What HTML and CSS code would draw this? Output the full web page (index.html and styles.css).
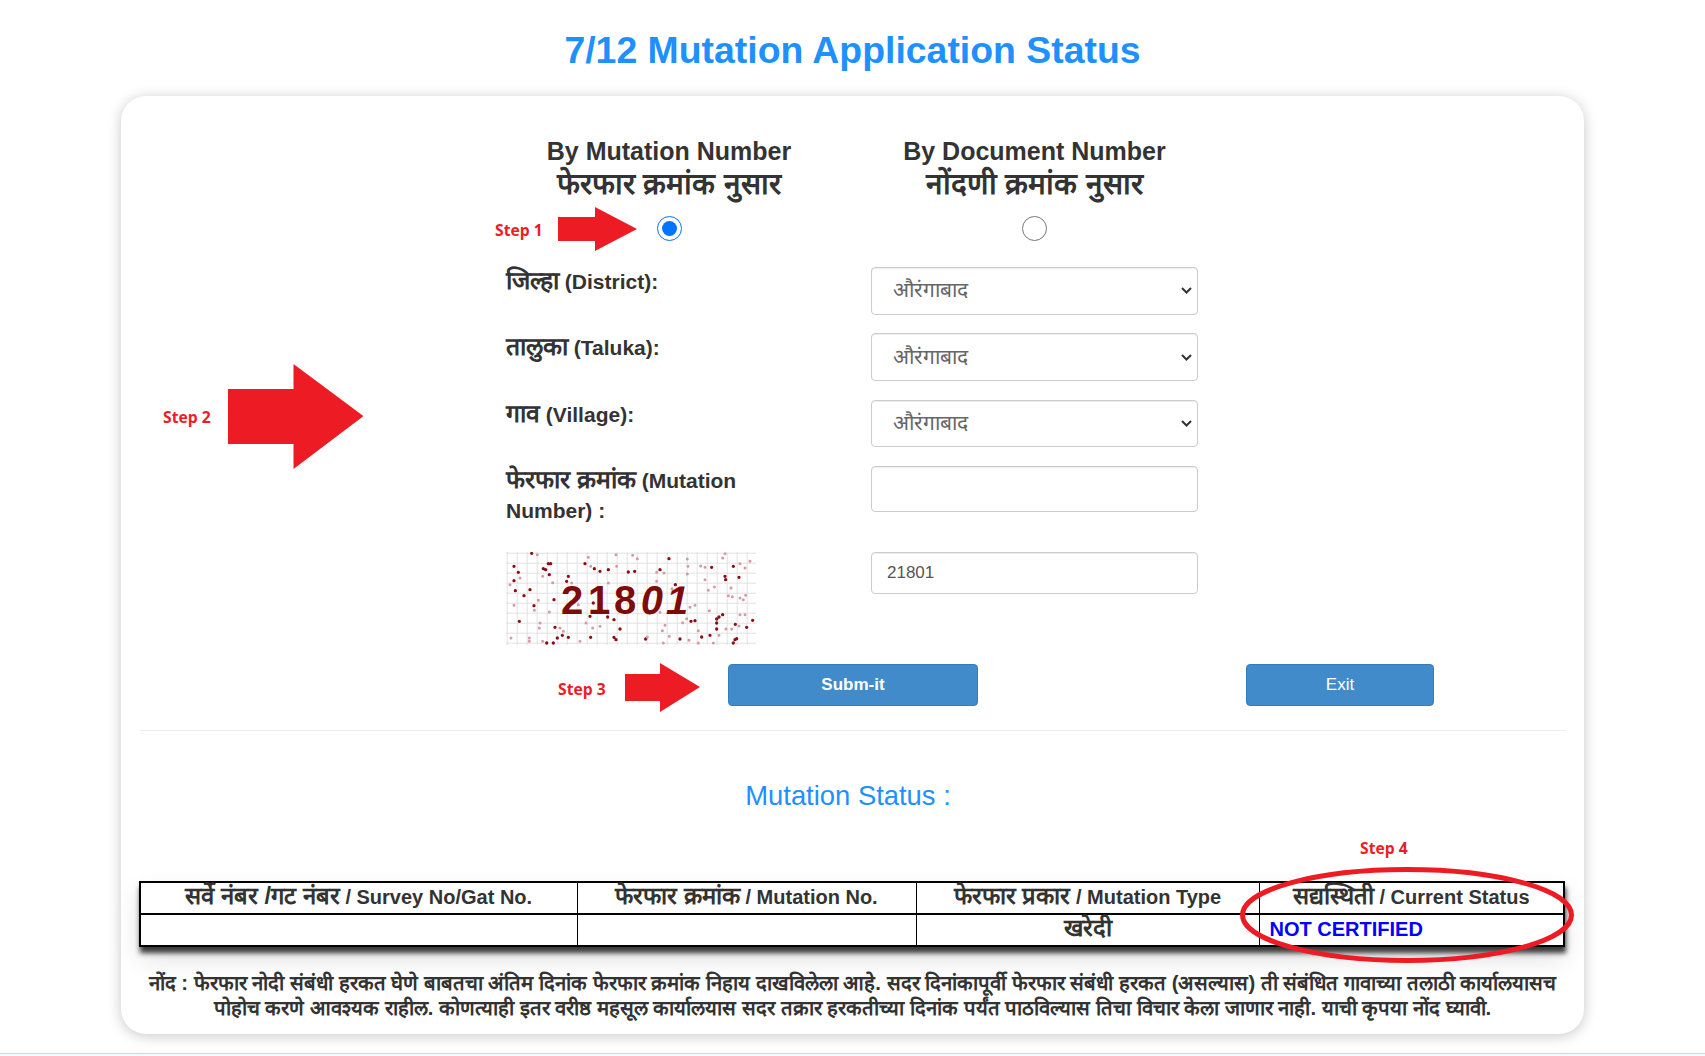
FILE: index.html
```html
<!DOCTYPE html>
<html lang="mr">
<head>
<meta charset="utf-8">
<title>7/12 Mutation Application Status</title>
<link rel="stylesheet" href="styles.css">
</head>
<body>
<div class="page">
  <h1 class="title">7/12 Mutation Application Status</h1>
  <main class="card">
    <form class="form">
      <div class="field choices">
        <label class="choice">By Mutation Number<br><span class="dv">फेरफार क्रमांक नुसार</span><input class="radio" type="radio" name="mode" checked></label>
        <label class="choice">By Document Number<br><span class="dv">नोंदणी क्रमांक नुसार</span><input class="radio" type="radio" name="mode"></label>
      </div>
      <div class="field">
        <label class="label"><span class="dv">जिल्हा</span> (District):</label>
        <select class="control picker"><option>औरंगाबाद</option></select>
      </div>
      <div class="field">
        <label class="label"><span class="dv">तालुका</span> (Taluka):</label>
        <select class="control picker"><option>औरंगाबाद</option></select>
      </div>
      <div class="field">
        <label class="label"><span class="dv">गाव</span> (Village):</label>
        <select class="control picker"><option>औरंगाबाद</option></select>
      </div>
      <div class="field field-tall">
        <label class="label label-wrap"><span class="dv">फेरफार क्रमांक</span> (Mutation Number) :</label>
        <input class="control" type="text">
      </div>
      <div class="field field-captcha">
        <svg class="captcha" viewBox="0 0 250 93" role="img" aria-label="captcha">
          <defs>
            <pattern id="grid" x="0.7" y="0.7" width="10" height="10" patternUnits="userSpaceOnUse">
              <path d="M10 0H0V10" fill="none" stroke="#d9d9d9" stroke-width="1.5"/>
            </pattern>
            <filter id="soft"><feGaussianBlur stdDeviation="0.5"/></filter>
          </defs>
          <rect width="250" height="93" fill="url(#grid)"/>
          <g filter="url(#soft)">
            <g transform="translate(-6 -4) scale(.3333)">
              <path class="speck" d="M95 16h0M42 55h0M55 73h0M42 98h0M46 128h0M90 125h0M72 143h0M145 47h0M152 47h0M130 62h0M137 65h0M148 80h0M162 155h0M102 173h0M58 220h0M165 238h0M172 270h0M187 262h0M205 268h0M140 285h0M160 285h0M205 85h0M200 100h0M255 47h0M283 62h0M300 70h0M325 65h0M385 72h0M280 165h0M270 205h0M323 207h0M342 215h0M360 243h0M342 268h0M348 275h0M272 268h0"/>
              <path class="speck faint" d="M112 20h0M60 90h0M128 85h0M158 104h0M115 157h0M103 187h0M42 172h0M120 225h0M148 192h0M118 240h0M180 240h0M190 250h0M33 270h0M88 270h0M88 280h0M128 280h0M215 105h0M265 28h0M272 55h0M348 20h0M350 55h0M325 105h0M235 170h0M240 190h0M258 225h0M278 240h0M300 235h0M240 280h0M30 110h0"/>
            </g>
            <g transform="translate(124 -4) scale(.3333)">
              <path class="speck" d="M117 32h0M245 58h0M90 65h0M14 70h0M310 55h0M285 85h0M287 95h0M327 88h0M136 110h0M278 200h0M267 207h0M260 213h0M260 225h0M195 218h0M183 220h0M260 243h0M316 229h0M350 238h0M240 262h0M215 267h0M150 273h0M47 273h0M315 275h0M310 285h0M320 272h0M368 217h0"/>
              <path class="speck faint" d="M8 22h0M22 32h0M172 33h0M174 55h0M212 54h0M225 58h0M80 73h0M102 75h0M172 78h0M285 17h0M278 30h0M330 47h0M360 40h0M345 60h0M225 95h0M253 117h0M303 120h0M80 100h0M126 122h0M235 127h0M295 143h0M307 146h0M347 142h0M330 150h0M340 155h0M195 172h0M180 178h0M90 193h0M238 188h0M330 200h0M345 200h0M170 212h0M158 224h0M327 234h0M288 243h0M305 243h0M205 248h0M267 262h0M118 265h0M52 267h0M97 248h0M105 232h0M177 277h0M100 285h0M205 285h0M250 285h0"/>
            </g>
          </g>
          <text class="code" x="55" y="62">2</text>
          <text class="code" x="82" y="62">1</text>
          <text class="code" x="108" y="62">8</text>
          <text class="code" transform="translate(133 62) skewX(-10)" x="0" y="0">0</text>
          <text class="code" transform="translate(158 62) skewX(-12)" x="0" y="0">1</text>
        </svg>
        <input class="control control-code" type="text" value="21801">
      </div>
      <div class="actions">
        <button class="btn btn-submit" type="button">Subm-it</button>
        <button class="btn btn-exit" type="button">Exit</button>
      </div>
    </form>
    <hr class="rule">
    <h2 class="status-heading">Mutation Status :</h2>
    <table class="status-table">
      <thead>
        <tr>
          <th class="col-survey"><span class="dv">सर्वे नंबर /गट नंबर</span> / Survey No/Gat No.</th>
          <th class="col-number"><span class="dv">फेरफार क्रमांक</span> / Mutation No.</th>
          <th class="col-type"><span class="dv">फेरफार प्रकार</span> / Mutation Type</th>
          <th class="col-state"><span class="dv">सद्यस्थिती</span> / Current Status</th>
        </tr>
      </thead>
      <tbody>
        <tr>
          <td></td>
          <td></td>
          <td><span class="dv">खरेदी</span></td>
          <td class="state">NOT CERTIFIED</td>
        </tr>
      </tbody>
    </table>
    <p class="note">नोंद : फेरफार नोदी संबंधी हरकत घेणे बाबतचा अंतिम दिनांक फेरफार क्रमांक निहाय दाखविलेला आहे. सदर दिनांकापूर्वी फेरफार संबंधी हरकत (असल्यास) ती संबंधित गावाच्या तलाठी कार्यालयासच<br>पोहोच करणे आवश्यक राहील. कोणत्याही इतर वरीष्ठ महसूल कार्यालयास सदर तक्रार हरकतीच्या दिनांक पर्यंत पाठविल्यास तिचा विचार केला जाणार नाही. याची कृपया नोंद घ्यावी.</p>
  </main>
  <footer class="foot"></footer>

  <span class="step step-1">Step 1</span>
  <svg class="mark arrow-1" viewBox="0 0 79 44"><polygon points="0,10 37,10 37,0 79,22 37,44 37,34 0,34"/></svg>
  <span class="step step-2">Step 2</span>
  <svg class="mark arrow-2" viewBox="0 0 135.5 105"><polygon points="0,25 65.5,25 65.5,0 135.5,52 65.5,105 65.5,80 0,80"/></svg>
  <span class="step step-3">Step 3</span>
  <svg class="mark arrow-3" viewBox="0 0 75 49"><polygon points="0,11 35,11 35,0 75,24 35,49 35,38 0,38"/></svg>
  <span class="step step-4">Step 4</span>
  <svg class="ring" viewBox="0 0 334 96"><ellipse cx="167" cy="48" rx="164.5" ry="45.5"/></svg>
</div>
</body>
</html>
```
FILE: styles.css
```css
* { box-sizing: border-box; }
html, body { margin: 0; padding: 0; background: #fff; }
body { font-family: "Liberation Sans", Arial, sans-serif; color: #333; }
.page { position: relative; width: 1705px; height: 1056px; overflow: hidden; }
.dv { font-size: 1.19em; line-height: 0; }

.title {
  margin: 0;
  height: 96px;
  padding: 30px 0 0;
  font-size: 37.4px;
  line-height: 40px;
  font-weight: 700;
  text-align: center;
  color: #1e90ff;
}

.card {
  height: 938px;
  margin: 0 121px;
  padding: 38px 19px 0;
  background: #fff;
  border-radius: 25px;
  box-shadow: 0 2px 14px rgba(0, 0, 0, .22);
}

.form { padding-left: 366px; }
.field {
  display: grid;
  grid-template-columns: 326px 327px;
  column-gap: 39px;
  margin-bottom: 18.8px;
}
.choices { margin-bottom: 26px; }
.choice {
  display: block;
  font-size: 25px;
  line-height: 34px;
  font-weight: 700;
  text-align: center;
}
.radio {
  display: block;
  width: 25px;
  height: 25px;
  margin: 14px auto 0;
  accent-color: #0075ff;
}
.label {
  font-size: 21px;
  line-height: 30px;
  font-weight: 700;
}
.label .dv { font-size: 1.18em; }
.label-wrap { padding-right: 60px; }
.control {
  display: block;
  width: 100%;
  height: 47.5px;
  padding: 0 12px 2px 21px;
  border: 1px solid #ccc;
  border-radius: 4px;
  background: #fff;
  box-shadow: inset 0 1px 1px rgba(0, 0, 0, .075);
  font-family: inherit;
  font-size: 21px;
  color: #666;
}
.picker {
  appearance: none;
  background: #fff url("data:image/svg+xml,%3Csvg xmlns='http://www.w3.org/2000/svg' width='11' height='7'%3E%3Cpath d='M1 1l4.5 4.5L10 1' fill='none' stroke='%23333' stroke-width='2'/%3E%3C/svg%3E") no-repeat right 5px center;
}
.field-tall { margin-bottom: 26.6px; }
.field-tall .control { height: 46.5px; }
.field-captcha { margin-bottom: 19px; }
.captcha { display: block; width: 250px; height: 93px; }
.control-code {
  height: 41.5px;
  padding: 0 12px 0 15px;
  font-size: 17px;
  color: #555;
}
.speck {
  fill: none;
  stroke: #8b0d16;
  stroke-width: 10;
  stroke-linecap: round;
}
.speck.faint { stroke: #d39aa0; stroke-width: 9; }
.code {
  font-family: "Liberation Sans", Arial, sans-serif;
  font-size: 40px;
  font-weight: 700;
  fill: #7e0a0a;
}

.actions {
  display: flex;
  margin-left: 222px;
}
.btn {
  height: 42px;
  padding: 0;
  border: 1px solid #357ebd;
  border-radius: 4px;
  background: #428bca;
  font-family: inherit;
  font-size: 17px;
  color: #fff;
}
.btn-submit { width: 250px; font-weight: 700; }
.btn-exit { width: 188px; margin-left: 268px; }

.rule {
  margin: 24px 0 0;
  border: 0;
  border-top: 1px solid #eee;
}
.status-heading {
  margin: 44.5px 0 65px;
  padding-right: 9px;
  font-size: 27.4px;
  line-height: 40px;
  font-weight: 400;
  text-align: center;
  color: #1e90ff;
}

.status-table {
  width: 1424px;
  margin-left: -1px;
  border-collapse: collapse;
  table-layout: fixed;
  border: 2px solid #000;
  box-shadow: 1px 6px 5px #3a3a3a, 0 12px 25px rgba(0, 0, 0, .12);
}
.status-table th,
.status-table td {
  height: 32px;
  padding: 0 0 2px;
  border: 1px solid #000;
  font-size: 20px;
  line-height: 28px;
  font-weight: 700;
  text-align: center;
  color: #333;
}
.status-table thead th { border-bottom-width: 2px; }
.col-survey { width: 437px; }
.col-number { width: 339px; }
.col-type { width: 343px; }
.col-state { width: 305px; }
.status-table .state {
  padding-left: 10px;
  font-size: 20px;
  text-align: left;
  color: #00f;
}

.note {
  margin: 24px 0 0;
  font-size: 20.3px;
  line-height: 25px;
  font-weight: 700;
  text-align: center;
  color: #333;
}

.foot {
  height: 3px;
  margin-top: 19px;
  border-top: 1px solid #b5e3e8;
  background: #f4fbfb;
}

.step {
  position: absolute;
  font-family: "Open Sans", sans-serif;
  font-size: 15.7px;
  line-height: 18px;
  font-weight: 700;
  white-space: nowrap;
  color: #ed1c24;
}
.step-1 { left: 495px; top: 221px; }
.step-2 { left: 163px; top: 408px; }
.step-3 { left: 558px; top: 680px; }
.step-4 { left: 1360px; top: 839px; }

.mark { position: absolute; fill: #ed1c24; }
.arrow-1 { left: 558px; top: 207px; width: 79px; height: 44px; }
.arrow-2 { left: 227.5px; top: 364px; width: 135.5px; height: 105px; }
.arrow-3 { left: 625px; top: 663px; width: 75px; height: 49px; }
.ring {
  position: absolute;
  left: 1240px;
  top: 867px;
  width: 334px;
  height: 96px;
  fill: none;
  stroke: #ed1c24;
  stroke-width: 5;
}
```
